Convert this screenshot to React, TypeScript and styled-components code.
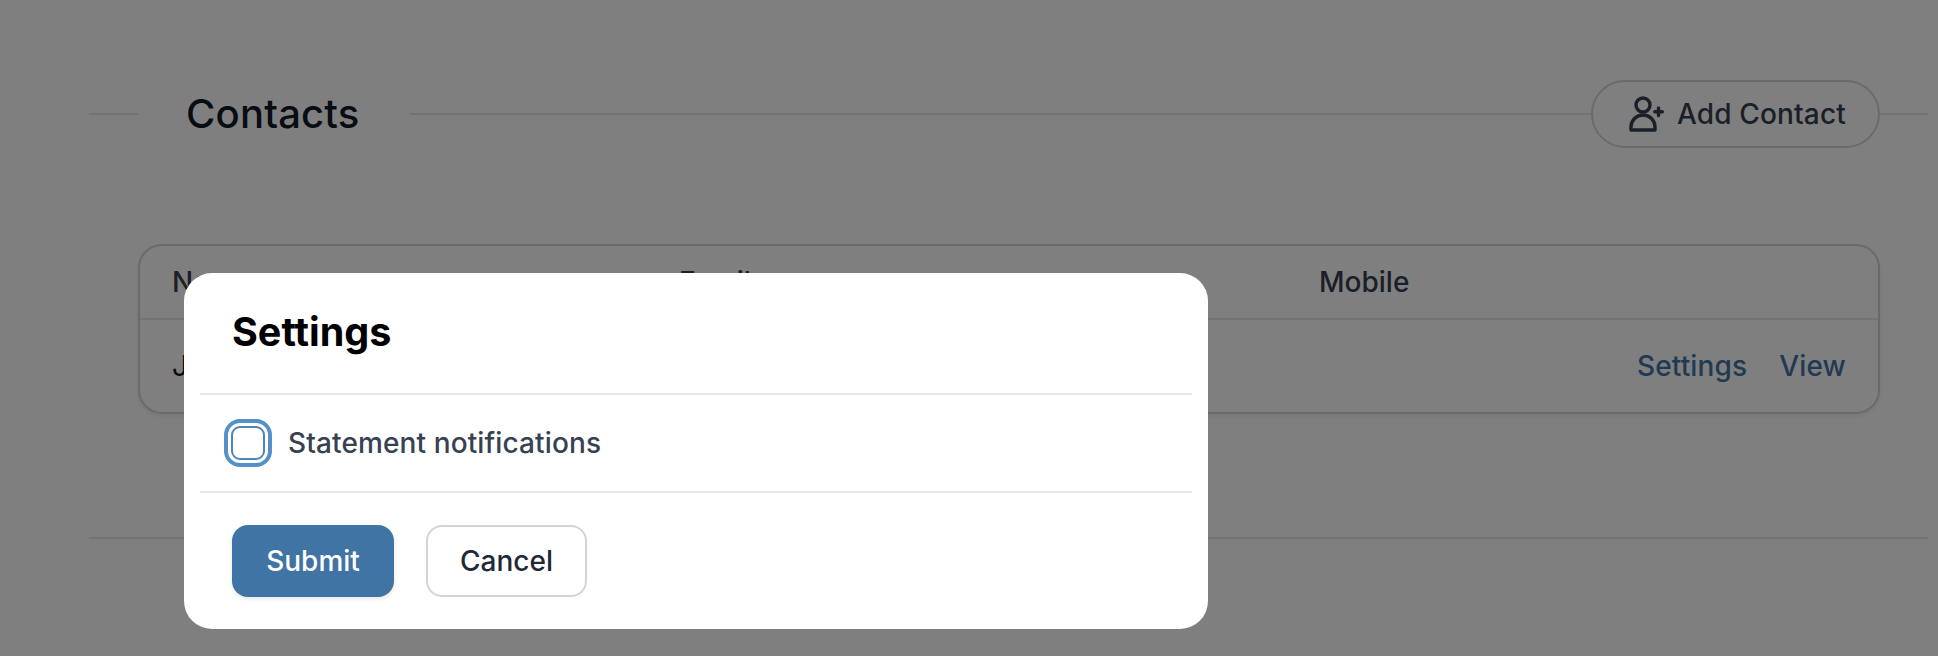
import styled, { createGlobalStyle } from 'styled-components';

const GlobalStyle = createGlobalStyle`
	* {
		box-sizing: border-box;
	}
	html,
	body {
		margin: 0;
		padding: 0;
		background: #ffffff;
		font-family: 'Inter', 'Liberation Sans', sans-serif;
		overflow: hidden;
	}
`;

const UserPlusIcon = () => (
	<svg width="36" height="38" viewBox="0 0 36 38" fill="none" stroke="currentColor" strokeWidth="3.4" strokeLinecap="round" strokeLinejoin="round">
		<circle cx="15" cy="10" r="7" />
		<path d="M3 35v-3a12 12 0 0 1 24 0v3z" />
		<path d="M30.5 13v7.5M26.8 16.7h7.5" />
	</svg>
);

const App = () => {
	return (
		<>
			<GlobalStyle />
			<StPage>
				<StHeader>
					<StRule $width="49px" />
					<StTitle>Contacts</StTitle>
					<StRule />
					<StAddButton type="button">
						<UserPlusIcon />
						Add Contact
					</StAddButton>
					<StRule $width="48px" />
				</StHeader>
				<StTable>
					<StTableRow $head>
						<StCell $head $width="507px">Name</StCell>
						<StCell $head $width="640px">Email</StCell>
						<StCell $head>Mobile</StCell>
					</StTableRow>
					<StTableRow>
						<StCell $width="507px">Jane Cooper</StCell>
						<StCell $width="640px">jane@example.com</StCell>
						<StCell />
						<StLink>Settings</StLink>
						<StLink>View</StLink>
					</StTableRow>
				</StTable>
				<StFooterRule />
			</StPage>
			<StOverlay>
				<StModal>
					<StModalTitle>Settings</StModalTitle>
					<StCheckRow>
						<StCheckbox type="checkbox" id="statement" />
						<StCheckLabel htmlFor="statement">Statement notifications</StCheckLabel>
					</StCheckRow>
					<StModalActions>
						<StSubmit type="button">Submit</StSubmit>
						<StCancel type="button">Cancel</StCancel>
					</StModalActions>
				</StModal>
			</StOverlay>
		</>
	);
};

export default App;

const StPage = styled.div`
	height: 656px;
	padding: 80px 10px 0 89px;
`;

const StHeader = styled.header`
	display: flex;
	align-items: center;
	height: 68px;
`;

const StRule = styled.div<{ $width?: string }>`
	flex: ${({ $width }) => ($width ? `0 0 ${$width}` : '1')};
	height: 2px;
	background: #e5e7eb;
`;

const StTitle = styled.h1`
	margin: 0 50px 2px 48px;
	font-size: 40px;
	font-weight: 500;
	letter-spacing: 0.2px;
	color: #111827;
`;

const StAddButton = styled.button`
	display: flex;
	align-items: center;
	gap: 13px;
	width: 289px;
	height: 68px;
	padding: 0 30px 0 35px;
	background: transparent;
	border: 2px solid #d1d5db;
	border-radius: 34px;
	font-family: inherit;
	font-size: 28px;
	font-weight: 500;
	letter-spacing: 0.15px;
	color: #374151;
	white-space: nowrap;
`;

const StTable = styled.div`
	margin: 96px 48px 0 49px;
	height: 170px;
	border: 2px solid #d1d5db;
	border-radius: 24px;
	box-shadow: 0 2px 4px rgba(0, 0, 0, 0.08);
`;

const StTableRow = styled.div<{ $head?: boolean }>`
	display: flex;
	align-items: center;
	height: ${({ $head }) => ($head ? '74px' : '91px')};
	padding: 0 32px;
	border-bottom: ${({ $head }) => ($head ? '2px solid #e5e7eb' : 'none')};
`;

const StCell = styled.div<{ $head?: boolean; $width?: string }>`
	flex: ${({ $width }) => ($width ? `0 0 ${$width}` : '1')};
	font-size: 28px;
	font-weight: ${({ $head }) => ($head ? 500 : 400)};
	color: ${({ $head }) => ($head ? '#374151' : '#111827')};
	white-space: nowrap;
`;

const StLink = styled.a`
	margin-left: 32px;
	font-size: 28px;
	font-weight: 500;
	letter-spacing: 0.15px;
	color: #3f74a5;
`;

const StFooterRule = styled.div`
	margin: 123px 0 0 0;
	height: 2px;
	background: #e5e7eb;
`;

const StOverlay = styled.div`
	position: fixed;
	inset: 0;
	padding: 273px 0 0 184px;
	background: rgba(0, 0, 0, 0.5);
`;

const StModal = styled.div`
	width: 1024px;
	height: 356px;
	padding: 0 16px;
	background: #ffffff;
	border-radius: 28px;
`;

const StModalTitle = styled.h2`
	display: flex;
	align-items: center;
	height: 122px;
	margin: 0;
	padding: 0 0 2px 32px;
	border-bottom: 2px solid #e5e7eb;
	font-size: 39.5px;
	font-weight: 700;
	color: #000000;
`;

const StCheckRow = styled.div`
	display: flex;
	align-items: center;
	height: 98px;
	padding-left: 31px;
	border-bottom: 2px solid #e5e7eb;
`;

const StCheckbox = styled.input`
	appearance: none;
	width: 34px;
	height: 34px;
	margin: 0;
	background: #ffffff;
	border: 2px solid #4f86b8;
	border-radius: 9px;
	box-shadow: 0 0 0 3px #ffffff, 0 0 0 7px #5590c8;
`;

const StCheckLabel = styled.label`
	margin-left: 23px;
	font-size: 28px;
	font-weight: 500;
	letter-spacing: 0.12px;
	color: #374151;
`;

const StModalActions = styled.div`
	display: flex;
	gap: 32px;
	padding: 32px 0 0 32px;
`;

const StSubmit = styled.button`
	width: 162px;
	height: 72px;
	background: #3f74a5;
	border: none;
	border-radius: 16px;
	box-shadow: 0 2px 4px rgba(0, 0, 0, 0.1);
	font-family: inherit;
	font-size: 28px;
	font-weight: 500;
	color: #ffffff;
`;

const StCancel = styled.button`
	width: 161px;
	height: 72px;
	background: #ffffff;
	border: 2px solid #d1d5db;
	border-radius: 16px;
	font-family: inherit;
	font-size: 28px;
	font-weight: 500;
	color: #1f2937;
`;
